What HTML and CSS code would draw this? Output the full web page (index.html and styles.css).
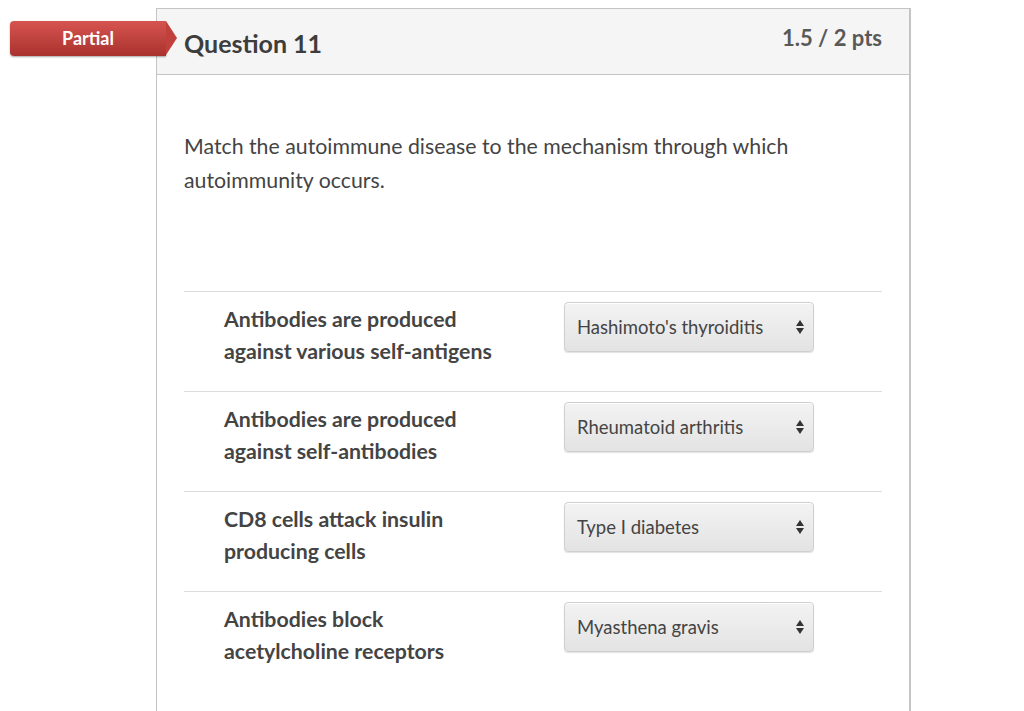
FILE: index.html
```html
<!DOCTYPE html>
<html>
<head>
<meta charset="utf-8">
<link rel="stylesheet" href="styles.css">
</head>
<body>
<div class="card">
  <div class="badge">Partial</div>
  <div class="header">
    <div class="title">Question 11</div>
    <div class="pts">1.5 / 2 pts</div>
  </div>
  <div class="body">
    <p class="prompt">Match the autoimmune disease to the mechanism through which autoimmunity occurs.</p>
    <div class="rows">
      <div class="row">
        <div class="label">Antibodies are produced against various self-antigens</div>
        <div class="select"><span>Hashimoto's thyroiditis</span><span class="arrows"></span></div>
      </div>
      <div class="row">
        <div class="label">Antibodies are produced against self-antibodies</div>
        <div class="select"><span>Rheumatoid arthritis</span><span class="arrows"></span></div>
      </div>
      <div class="row">
        <div class="label">CD8 cells attack insulin producing cells</div>
        <div class="select"><span>Type I diabetes</span><span class="arrows"></span></div>
      </div>
      <div class="row">
        <div class="label">Antibodies block acetylcholine receptors</div>
        <div class="select"><span>Myasthena gravis</span><span class="arrows"></span></div>
      </div>
    </div>
  </div>
</div>
</body>
</html>
```

FILE: styles.css
```css
html, body {
  margin: 0;
  padding: 0;
  background: #fff;
}
body {
  padding-top: 8px;
  font-family: Lato, "Liberation Sans", sans-serif;
  color: #444;
}
.card {
  position: relative;
  margin-left: 156px;
  width: 752px;
  border-top: 1px solid #c4c4c4;
  border-left: 1px solid #c4c4c4;
  border-right: 2px solid #c4c4c4;
  min-height: 720px;
}
.badge {
  position: absolute;
  left: -147px;
  top: 12px;
  width: 156px;
  height: 35px;
  background: linear-gradient(#d65450, #a9322e);
  color: #fff;
  font-weight: 700;
  font-size: 18px;
  line-height: 35px;
  text-align: center;
  border-radius: 4px 0 0 4px;
  box-shadow: 0 1px 2px rgba(0,0,0,0.35);
}
.badge::after {
  content: "";
  position: absolute;
  right: -11px;
  top: 0;
  width: 0;
  height: 0;
  border-top: 17.5px solid transparent;
  border-bottom: 17.5px solid transparent;
  border-left: 11px solid #c0403c;
}
.header {
  height: 65px;
  background: #f5f5f5;
  border-bottom: 1px solid #c4c4c4;
  display: flex;
  justify-content: space-between;
  align-items: flex-start;
  padding: 0 27px 0 27px;
}
.title {
  font-size: 25px;
  font-weight: 700;
  color: #3d3d3d;
  margin-top: 19px;
}
.pts {
  font-size: 22px;
  font-weight: 700;
  color: #595959;
  margin-top: 15px;
}
.body {
  padding: 0 27px 0 27px;
}
.prompt {
  margin: 0;
  padding-top: 54px;
  font-size: 21.3px;
  line-height: 34px;
  color: #444;
  width: 660px;
}
.rows {
  margin-top: 94px;
}
.row {
  height: 99px;
  border-top: 1px solid #dcdcdc;
  display: flex;
  align-items: flex-start;
}
.label {
  width: 278px;
  margin-left: 40px;
  margin-right: 22px;
  padding-top: 11px;
  font-size: 21.3px;
  font-weight: 700;
  line-height: 32px;
  color: #444;
}
.select {
  margin-left: 40px;
  margin-top: 10px;
  width: 250px;
  height: 50px;
  box-sizing: border-box;
  border: 1px solid #cfcfcf;
  border-radius: 4px;
  background: linear-gradient(#f3f3f3, #e3e3e3);
  box-shadow: inset 0 1px 0 #fff, 0 1px 1px rgba(0,0,0,0.12);
  display: flex;
  align-items: center;
  justify-content: space-between;
  padding: 0 9px 0 12px;
  font-size: 18.5px;
  color: #444;
}
.arrows {
  position: relative;
  width: 8px;
  height: 14px;
}
.arrows::before, .arrows::after {
  content: "";
  position: absolute;
  left: 0;
  width: 0;
  height: 0;
  border-left: 4px solid transparent;
  border-right: 4px solid transparent;
}
.arrows::before {
  top: 0;
  border-bottom: 6px solid #333;
}
.arrows::after {
  bottom: 0;
  border-top: 6px solid #333;
}
```
